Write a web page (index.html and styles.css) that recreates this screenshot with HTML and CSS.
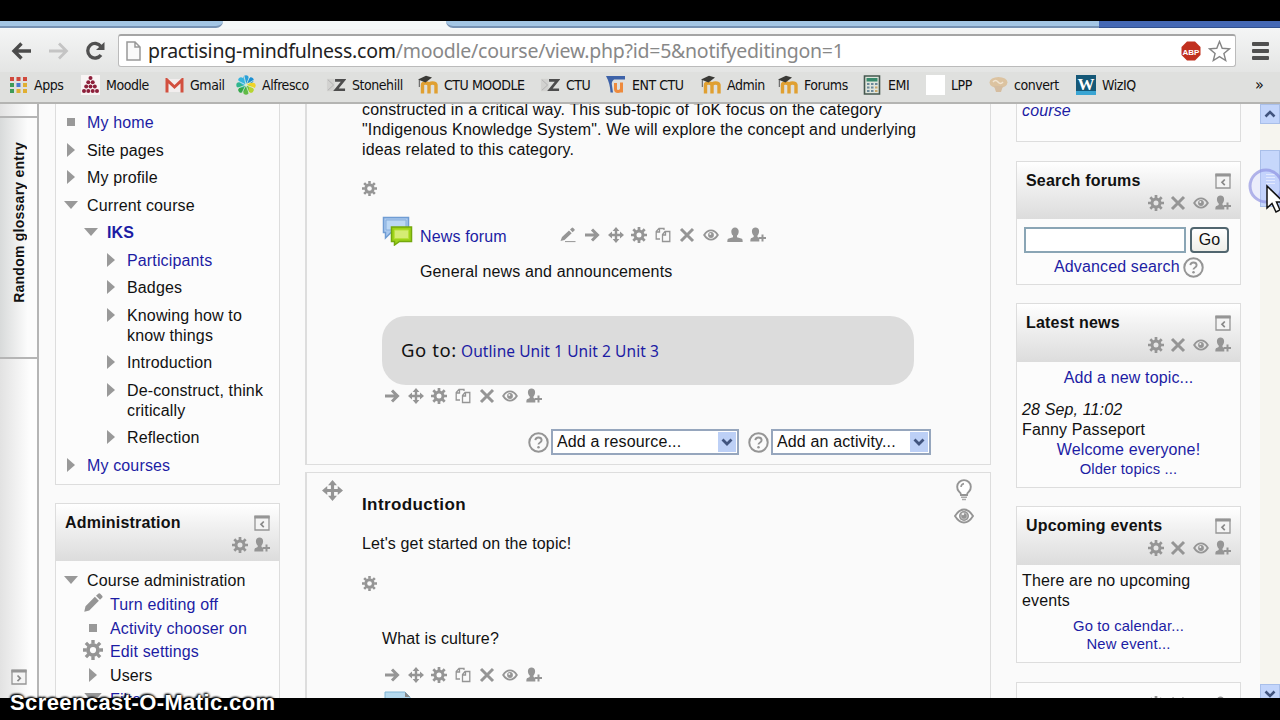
FILE: index.html
```
<!DOCTYPE html>
<html lang="en">
<head>
  <meta charset="UTF-8" />
  <meta name="viewport" content="width=device-width, initial-scale=1.0" />
  <title>IKS</title>
  <link rel="stylesheet" href="styles.css">
</head>
<body>
  <!-- icon set -->
  <svg class="defs" width="0" height="0">
    <symbol id="gear" viewBox="0 0 16 16">
      <circle cx="8" cy="8" r="4" fill="none" stroke="#959595" stroke-width="3"/>
      <path d="M8 0v3M8 13v3M0 8h3M13 8h3M2.3 2.3l2.2 2.2M11.5 11.5l2.2 2.2M13.7 2.3l-2.2 2.2M4.5 11.5l-2.2 2.2" stroke="#959595" stroke-width="2.7"/>
    </symbol>
    <symbol id="right" viewBox="0 0 16 16"><path d="M1 8h12M8 2.5L13.5 8L8 13.5" fill="none" stroke="#959595" stroke-width="3"/></symbol>
    <symbol id="move" viewBox="0 0 16 16"><path d="M8 2v12M2 8h12" stroke="#959595" stroke-width="2.4"/><path d="M8 0l3.4 4H4.600zM8 16l3.400-4H4.600zM0 8l4-3.400v6.800zM16 8l-4-3.400v6.800z" fill="#959595"/></symbol>
    <symbol id="copy" viewBox="0 0 16 16"><path d="M5 12H1.200V4.500L4 1.500H9V3M1.500 5H4.500V2M7.500 14.500V7.500L10 4.500H14.800V14.500zM7.500 8H10.500V5" fill="none" stroke="#959595" stroke-width="1.300"/></symbol>
    <symbol id="cross" viewBox="0 0 16 16"><path d="M2 2l12 12M14 2L2 14" stroke="#959595" stroke-width="3"/></symbol>
    <symbol id="eye" viewBox="0 0 16 16"><path d="M1.200 8Q4 3.400 8 3.400T14.800 8Q12 12.600 8 12.600T1.200 8z" fill="none" stroke="#959595" stroke-width="1.900"/><circle cx="8" cy="8" r="2.900" fill="#959595"/><circle cx="7.300" cy="6.900" r="1" fill="#eee"/></symbol>
    <symbol id="user" viewBox="0 0 16 16"><path d="M8 0.500a3.700 3.700 0 0 1 3.700 3.900c0 2-.8 3.300-1.700 4.200v1.700l5 1.500q.7.500.7 3.200H.3q0-2.700.7-3.200l5-1.500V8.600C5.100 7.700 4.300 6.400 4.300 4.400A3.700 3.700 0 0 1 8 .5z" fill="#959595"/></symbol>
    <symbol id="useradd" viewBox="0 0 16 16"><path d="M5.500 0.500a3.600 3.600 0 0 1 3.600 3.800c0 1.900-.8 3.200-1.600 4.200v1.600l1.800.7v3.700H.3q0-2.600.7-3.200l2.700-1.200V8.500C2.700 7.500 1.900 6.200 1.900 4.300A3.600 3.600 0 0 1 5.500.5z" fill="#959595"/><path d="M12.500 7.500v7M9 11h7" stroke="#959595" stroke-width="2"/></symbol>
    <symbol id="pencil" viewBox="0 0 16 16"><path d="M1 15l1-4.500L9.500 3l3.200 3.200L5 14zM10.400 2.200L12.200.5q.8-.6 1.600.1l1.500 1.500q.7.800 0 1.600l-1.700 1.700z" fill="#959595"/></symbol>
    <symbol id="edit" viewBox="0 0 16 16"><path d="M0.500 14l1.500-4L9 3.500l2.700 2.700L4.500 13zM10 2.600L12 .8q.6-.4 1.200.1l1.300 1.300q.5.600 0 1.200l-1.900 1.900z" fill="#959595"/><path d="M5 14.600h10.500" stroke="#959595" stroke-width="1"/></symbol>
    <symbol id="dockleft" viewBox="0 0 16 16"><path d="M1 1.500h14v13.500H1z" fill="#f4f4f4" stroke="#959595" stroke-width="1.300"/><path d="M.4 0.500h15.200v3H.4z" fill="#959595"/><path d="M9.800 6.500L7 9.300l2.800 2.800" fill="none" stroke="#888" stroke-width="1.700"/></symbol>
    <symbol id="dockright" viewBox="0 0 16 16"><path d="M1 1.500h14v13.500H1z" fill="#f4f4f4" stroke="#959595" stroke-width="1.300"/><path d="M.4 0.500h15.200v3H.4z" fill="#959595"/><path d="M6.500 6.500L9.300 9.300l-2.800 2.800" fill="none" stroke="#888" stroke-width="1.700"/></symbol>
    <symbol id="closed" viewBox="0 0 16 16"><path d="M4 1l8 7l-8 7z" fill="#999"/></symbol>
    <symbol id="open" viewBox="0 0 16 16"><path d="M1 4h14l-7 8z" fill="#999"/></symbol>
    <symbol id="leaf" viewBox="0 0 16 16"><path d="M4 4h8v8H4z" fill="#999"/></symbol>
    <symbol id="help" viewBox="0 0 20 20"><circle cx="10" cy="10" r="8.800" fill="#fafafa" stroke="#959595" stroke-width="1.900"/><path d="M7 7.800Q7.200 5.200 10 5.200T13 7.700Q13 9.200 11.200 10.200Q10 10.900 10 12" fill="none" stroke="#959595" stroke-width="1.800"/><circle cx="10" cy="14.500" r="1.200" fill="#959595"/></symbol>
    <symbol id="bulb" viewBox="0 0 20 22"><path d="M7 16Q7 14 5 12.500A6.800 6.800 0 1 1 15 12.500Q13 14 13 16z" fill="#fff" stroke="#959595" stroke-width="1.900"/><path d="M7 18.300h6M8 20.500h4" stroke="#aaa" stroke-width="1.400"/><path d="M7 8q.3-3 3-3.400" fill="none" stroke="#999" stroke-width="1.600"/></symbol>
    <symbol id="watch" viewBox="0 0 20 20"><path d="M1 10Q5 3.500 10 3.500T19 10Q15 16.500 10 16.500T1 10z" fill="#fff" stroke="#959595" stroke-width="1.900"/><circle cx="10" cy="10" r="5" fill="#959595"/><circle cx="10" cy="10" r="3.200" fill="none" stroke="#c9c9c9" stroke-width=".8"/><circle cx="9" cy="8" r="1.200" fill="#eee"/></symbol>
    <symbol id="mortar" viewBox="0 0 20 20">
      <path d="M4.500 18.500V10q0-2 3-2t3.500 2v8.500M11 10q.5-2 3.500-2t3.500 2v8.500" fill="none" stroke="#e0a032" stroke-width="3.400"/>
      <path d="M0 4.500L8 .8l6 1.600L7.500 7.500z" fill="#3a3a36"/><path d="M1.300 5v7" stroke="#555" stroke-width="1"/>
    </symbol>
    <symbol id="zed" viewBox="0 0 21 16"><path d="M1 1.500h8v13H1z" fill="#d2d2d0"/><path d="M2 2.500l6 5.500l-6 5.500" fill="none" stroke="#b2b2b2"/><path d="M9.500 3.200h9L10.500 13H20" fill="none" stroke="#4d4d4d" stroke-width="2.800"/></symbol>
  </svg>

  <div class="tabstrip">
    <span class="tab tab-left"></span>
    <span class="tab tab-right"></span>
    <span class="tab-end"></span>
  </div>

  <div class="toolbar">
    <svg class="nav-btn" width="22" height="20" viewBox="0 0 22 20"><path d="M3 10h17M10.500 2.500L3 10l7.500 7.500" fill="none" stroke="#4b4b4b" stroke-width="3.400"/></svg>
    <svg class="nav-btn" width="22" height="20" viewBox="0 0 22 20"><path d="M1 10h17M11 2.500l7.500 7.500l-7.500 7.500" fill="none" stroke="#c4c4c4" stroke-width="2.800"/></svg>
    <svg class="nav-btn" width="20" height="20" viewBox="0 0 20 20"><path d="M16 14a7.300 7.300 0 1 1 0-8.500" fill="none" stroke="#505050" stroke-width="3.300"/><path d="M19.500 1v8h-8.500z" fill="#505050"/></svg>
    <div class="omnibox">
      <svg width="15" height="20" viewBox="0 0 15 20"><path d="M1 1h8l5 5v13H1zM9 1v5h5" fill="#fafafa" stroke="#999" stroke-width="1.500"/></svg>
      <div class="url">practising-mindfulness.com<span>/moodle/course/view.php?id=5&amp;notifyeditingon=1</span></div>
      <svg width="20" height="20" viewBox="0 0 20 20"><path d="M6 .5h8L19.500 6v8L14 19.500H6L.5 14V6z" fill="#c1301f"/><text x="10" y="13.500" class="abp" text-anchor="middle">ABP</text></svg>
      <svg class="star" width="23" height="22" viewBox="0 0 23 22"><path d="M11.500 1.500l2.700 6.800l7.300.5l-5.600 4.700l1.800 7l-6.200-3.900l-6.200 3.900l1.800-7L1.500 8.800l7.300-.5z" fill="#fff" stroke="#858585" stroke-width="1.400"/></svg>
    </div>
    <div class="menu-btn"><i></i><i></i><i></i></div>
  </div>

  <div class="bookmarks">
    <div class="bm"><svg width="19" height="18" viewBox="0 0 19 18"><path d="M1 1h4v4H1zM7.500 1h4v4h-4zM14 1h4v4h-4z" fill="#d0493c"/><path d="M1 7h4v4H1z" fill="#3f9b58"/><path d="M7.500 7h4v4h-4z" fill="#4a78cf"/><path d="M14 7h4v4h-4zM7.500 13h4v4h-4zM14 13h4v4h-4z" fill="#e0af32"/><path d="M1 13h4v4H1z" fill="#3f9b58"/></svg>Apps</div>
    <div class="bm"><svg width="19" height="20" viewBox="0 0 19 20"><path d="M0 0h19v20H0z" fill="#f8f4f4"/><g fill="#8d1f3a"><circle cx="9.500" cy="3" r="2"/><circle cx="7.300" cy="7.300" r="2"/><circle cx="11.700" cy="7.300" r="2"/><circle cx="5.200" cy="11.600" r="2"/><circle cx="9.500" cy="11.600" r="2"/><circle cx="13.800" cy="11.600" r="2"/><circle cx="3" cy="16" r="2"/><circle cx="7.300" cy="16" r="2"/><circle cx="11.700" cy="16" r="2"/><circle cx="16" cy="16" r="2"/></g></svg>Moodle</div>
    <div class="bm"><svg width="19" height="15" viewBox="0 0 19 15"><path d="M1 1h17v13H1z" fill="#f2eeee"/><path d="M2 14.500V2l7.500 7L17 2v12.500" fill="none" stroke="#d2503f" stroke-width="3"/></svg>Gmail</div>
    <div class="bm"><svg width="20" height="20" viewBox="0 0 20 20"><g stroke-width="5.400" stroke-linecap="round"><path d="M10 7V3" stroke="#2b9fd8"/><path d="M12.500 8l2.500-3" stroke="#1c8fd2"/><path d="M13 10.500h4" stroke="#f0d428"/><path d="M12.500 12.500l2.500 2.500" stroke="#b7d531"/><path d="M10 13v4" stroke="#61bb46"/><path d="M7.500 12.500L5 15" stroke="#35a84a"/><path d="M7 10H3" stroke="#2fb58d"/><path d="M7.500 7.500L5 5" stroke="#35b4dd"/></g><path d="M10 10L8 1M10 10l8-5M10 10l8 3M10 10l3 8M10 10l-4 8M10 10l-8 3M10 10L2 6M10 10l4-9" stroke="#e4f0e4" stroke-width=".8"/></svg>Alfresco</div>
    <div class="bm"><svg width="20" height="16"><use href="#zed"/></svg>Stonehill</div>
    <div class="bm"><svg width="20" height="20"><use href="#mortar"/></svg>CTU MOODLE</div>
    <div class="bm"><svg width="20" height="16"><use href="#zed"/></svg>CTU</div>
    <div class="bm"><svg width="20" height="18" viewBox="0 0 20 18"><path d="M0 0h19v3.500H8q-3 2-2 6l1 7H4.500Q4 7 0 0z" fill="#3d62a8"/><path d="M9.500 7v6q0 2.500 2.500 2.500t3.500-2.500V6.500V16.500" fill="none" stroke="#ee8a3c" stroke-width="3"/></svg>ENT CTU</div>
    <div class="bm"><svg width="20" height="20"><use href="#mortar"/></svg>Admin</div>
    <div class="bm"><svg width="20" height="20"><use href="#mortar"/></svg>Forums</div>
    <div class="bm"><svg width="19" height="20" viewBox="0 0 19 20"><path d="M1.500 1h15v18h-15z" fill="#dfe5dc" stroke="#46584f" stroke-width="1.600"/><path d="M3.500 3h11v3.500h-11z" fill="#388a6c"/><path d="M4 9h2.500M8 9h2.500M12 9h2.500M4 12.500h2.500M8 12.500h2.500M4 16h2.500M8 16h2.500" stroke="#6d8a9a" stroke-width="2"/><path d="M12 12.500h2.500M12 16h2.500" stroke="#c9a86a" stroke-width="2"/></svg>EMI</div>
    <div class="bm"><svg width="19" height="20"><rect width="19" height="20" fill="#fff"/></svg>LPP</div>
    <div class="bm"><svg width="19" height="18" viewBox="0 0 19 18"><ellipse cx="9.500" cy="6.500" rx="9" ry="5.500" fill="#dcc3a0"/><path d="M5 10h9l-2 6H7z" fill="#d5bda0"/><path d="M4 6q2.500-3 5 0t5 0" fill="none" stroke="#f1e5d3" stroke-width="1.500"/></svg>convert</div>
    <div class="bm"><svg width="20" height="20" viewBox="0 0 20 20"><rect width="20" height="20" fill="#155877"/><path d="M0 16h20v4H0z" fill="#3aa5d3"/><text x="10" y="15" class="wiz" text-anchor="middle">W</text></svg>WizIQ</div>
    <div class="more">»</div>
  </div>

  <div class="page">
    <div class="dock">
      <div class="dock-item"><span>Random glossary entry</span></div>
      <svg class="dock-all" width="16" height="16"><use href="#dockright"/></svg>
    </div>

    <div class="col left">
      <div class="block nav">
        <div class="row"><svg><use href="#leaf"/></svg><a>My home</a></div>
        <div class="row"><svg><use href="#closed"/></svg>Site pages</div>
        <div class="row"><svg><use href="#closed"/></svg>My profile</div>
        <div class="row"><svg><use href="#open"/></svg>Current course</div>
        <div class="row l2"><svg><use href="#open"/></svg><a><b>IKS</b></a></div>
        <div class="row l3"><svg><use href="#closed"/></svg><a>Participants</a></div>
        <div class="row l3"><svg><use href="#closed"/></svg>Badges</div>
        <div class="row l3"><svg><use href="#closed"/></svg><span>Knowing how to<br>know things</span></div>
        <div class="row l3"><svg><use href="#closed"/></svg>Introduction</div>
        <div class="row l3"><svg><use href="#closed"/></svg><span>De-construct, think<br>critically</span></div>
        <div class="row l3"><svg><use href="#closed"/></svg>Reflection</div>
        <div class="row"><svg><use href="#closed"/></svg><a>My courses</a></div>
      </div>

      <div class="block admin">
        <div class="head">
          <div class="title"><h2>Administration</h2><svg><use href="#dockleft"/></svg></div>
          <div class="cmds"><svg><use href="#gear"/></svg><svg><use href="#useradd"/></svg></div>
        </div>
        <div class="tree">
          <div class="row"><svg><use href="#open"/></svg>Course administration</div>
          <div class="row sub"><svg class="big"><use href="#pencil"/></svg><a>Turn editing off</a></div>
          <div class="row sub"><svg><use href="#leaf"/></svg><a>Activity chooser on</a></div>
          <div class="row sub"><svg class="big"><use href="#gear"/></svg><a>Edit settings</a></div>
          <div class="row sub"><svg><use href="#closed"/></svg>Users</div>
          <div class="row sub"><svg class="big"><use href="#open"/></svg><a>Filters</a></div>
        </div>
      </div>
    </div>

    <div class="main">
      <div class="section first">
        <p class="summary">constructed in a critical way. This sub-topic of ToK focus on the category<br>"Indigenous Knowledge System". We will explore the concept and underlying<br>ideas related to this category.</p>
        <svg class="gear"><use href="#gear"/></svg>
        <div class="forum">
          <svg class="forum-icon" width="31" height="30" viewBox="0 0 31 30">
            <path d="M1.500 1.500h25v15H9L3.500 22V16.500h-2z" fill="#a9c8ee" stroke="#6f9cd3" stroke-width="1.500"/>
            <path d="M4 4h20v10H4z" fill="#bcd8f5" stroke="#86aedd"/>
            <path d="M9.500 11h20v14.500h-12L12.500 29v-3.500h-3z" fill="#9ed318" stroke="#74a80d" stroke-width="1.500"/>
            <path d="M12.500 14h14v8.500h-14z" fill="#d5ec74" stroke="#b9e03c"/>
          </svg>
          <a>News forum</a>
          <div class="cmds"><svg><use href="#edit"/></svg><svg><use href="#right"/></svg><svg><use href="#move"/></svg><svg><use href="#gear"/></svg><svg><use href="#copy"/></svg><svg><use href="#cross"/></svg><svg><use href="#eye"/></svg><svg><use href="#user"/></svg><svg><use href="#useradd"/></svg></div>
        </div>
        <p class="desc">General news and announcements</p>
        <div class="goto"><span>Go to:</span> <a>Outline</a> <a>Unit 1</a> <a>Unit 2</a> <a>Unit 3</a></div>
        <div class="cmds label-cmds"><svg><use href="#right"/></svg><svg><use href="#move"/></svg><svg><use href="#gear"/></svg><svg><use href="#copy"/></svg><svg><use href="#cross"/></svg><svg><use href="#eye"/></svg><svg><use href="#useradd"/></svg></div>
        <div class="adders">
          <svg class="help"><use href="#help"/></svg>
          <div class="select resource">Add a resource...<i><svg width="12" height="8" viewBox="0 0 12 8"><path d="M1.500 1.500L6 6l4.500-4.500" fill="none" stroke="#41547e" stroke-width="2.800"/></svg></i></div>
          <svg class="help"><use href="#help"/></svg>
          <div class="select activity">Add an activity...<i><svg width="12" height="8" viewBox="0 0 12 8"><path d="M1.500 1.500L6 6l4.500-4.500" fill="none" stroke="#41547e" stroke-width="2.800"/></svg></i></div>
        </div>
      </div>

      <div class="section second">
        <svg class="mover"><use href="#move"/></svg>
        <div class="content">
          <h3>Introduction</h3>
          <p class="lead">Let's get started on the topic!</p>
          <svg class="gear"><use href="#gear"/></svg>
          <p class="label">What is culture?</p>
          <div class="cmds label-cmds"><svg><use href="#right"/></svg><svg><use href="#move"/></svg><svg><use href="#gear"/></svg><svg><use href="#copy"/></svg><svg><use href="#cross"/></svg><svg><use href="#eye"/></svg><svg><use href="#useradd"/></svg></div>
          <svg class="file" width="28" height="20" viewBox="0 0 28 20"><path d="M1 1h20l5 5v14H1z" fill="#b5d9ee" stroke="#7fb4d4"/><path d="M21 1l5 5h-5z" fill="#888"/></svg>
        </div>
        <div class="side"><svg width="20" height="22"><use href="#bulb"/></svg><svg width="20" height="20"><use href="#watch"/></svg></div>
      </div>
    </div>

    <div class="col right">
      <div class="block top"><a><em>course</em></a></div>

      <div class="block search">
        <div class="head">
          <div class="title"><h2>Search forums</h2><svg><use href="#dockleft"/></svg></div>
          <div class="cmds"><svg><use href="#gear"/></svg><svg><use href="#cross"/></svg><svg><use href="#eye"/></svg><svg><use href="#useradd"/></svg></div>
        </div>
        <div class="search-form"><input type="text"><button type="button">Go</button></div>
        <div class="advanced"><a>Advanced search</a><svg class="help"><use href="#help"/></svg></div>
      </div>

      <div class="block news">
        <div class="head">
          <div class="title"><h2>Latest news</h2><svg><use href="#dockleft"/></svg></div>
          <div class="cmds"><svg><use href="#gear"/></svg><svg><use href="#cross"/></svg><svg><use href="#eye"/></svg><svg><use href="#useradd"/></svg></div>
        </div>
        <p class="mid add"><a>Add a new topic...</a></p>
        <p><em>28 Sep, 11:02</em></p>
        <p>Fanny Passeport</p>
        <p class="mid"><a>Welcome everyone!</a></p>
        <p class="mid small"><a>Older topics ...</a></p>
      </div>

      <div class="block events">
        <div class="head">
          <div class="title"><h2>Upcoming events</h2><svg><use href="#dockleft"/></svg></div>
          <div class="cmds"><svg><use href="#gear"/></svg><svg><use href="#cross"/></svg><svg><use href="#eye"/></svg><svg><use href="#useradd"/></svg></div>
        </div>
        <p class="none">There are no upcoming<br>events</p>
        <p class="mid small"><a>Go to calendar...</a></p>
        <p class="mid small"><a>New event...</a></p>
      </div>

      <div class="block last">
        <div class="cmds"><svg><use href="#gear"/></svg><svg><use href="#cross"/></svg><svg><use href="#eye"/></svg><svg><use href="#useradd"/></svg></div>
      </div>
    </div>

    <div class="scrollbar">
      <div class="sb-btn"><svg width="12" height="8" viewBox="0 0 12 8"><path d="M1.500 6.500L6 2l4.500 4.500" fill="none" stroke="#41547e" stroke-width="2.600"/></svg></div>
      <div class="thumb"><i></i><i></i><i></i><i></i></div>
      <div class="sb-btn down"><svg width="12" height="8" viewBox="0 0 12 8"><path d="M1.500 1.500L6 6l4.500-4.500" fill="none" stroke="#41547e" stroke-width="2.600"/></svg></div>
    </div>
  </div>

  <div class="watermark">Screencast-O-Matic.com</div>
  <svg class="pointer" width="34" height="46" viewBox="0 0 34 46">
    <circle cx="20" cy="19" r="16" fill="rgba(190,200,255,.25)" stroke="#8c8fe0" stroke-opacity=".65" stroke-width="3"/>
    <path d="M21 19v22l5-4.500l4 8.500l4-2l-3.500-8h7z" fill="#fff" stroke="#111" stroke-width="1.500"/>
  </svg>
</body>
</html>
```
FILE: styles.css
```
* { box-sizing: border-box; margin: 0; padding: 0; }
body {
  position: relative;
  width: 1280px;
  height: 720px;
  overflow: hidden;
  padding-top: 21px;
  background: #000;
  color: #111;
  font-family: "Liberation Sans", Arial, sans-serif;
  font-size: 16px;
  letter-spacing: 0.14px;
  line-height: 20px;
  white-space: nowrap;
}
a { color: #1c1ca4; }
svg { flex: none; display: block; }
.defs { position: absolute; }

/* browser chrome */
.tabstrip {
  display: flex;
  height: 8px;
  background: #f5f9f9;
}
.tab {
  height: 7px;
  background: #a3c6e4;
  border-bottom: 2px solid #7793b4;
}
.tab-left { width: 223px; border-radius: 0 0 7px 0; }
.tab-right { width: 653px; margin-left: 223px; border-radius: 0 0 0 7px; }
.tab-end { flex: 1; height: 7px; background: #4468b4; border-bottom: 1px solid #31508f; }
.toolbar {
  display: flex;
  align-items: center;
  height: 43px;
  padding: 0 11px;
  background: linear-gradient(#f4f5f5, #e4e5e4);
}
.nav-btn { margin-right: 15px; }
.omnibox {
  display: flex;
  align-items: center;
  width: 1118px;
  height: 33px;
  padding: 0 4px 0 7px;
  background: #fff;
  border: 1px solid #bbb;
  border-top: 2px solid #a5a5a5;
  border-radius: 3px;
}
.nav-btn + .omnibox { margin-left: -2px; }
.url {
  flex: 1;
  margin-left: 7px;
  font-family: "Noto Sans", sans-serif;
  font-size: 19.5px;
  letter-spacing: -0.25px;
  color: #222;
}
.url span { color: #888; }
.abp { font: bold 8px "Liberation Sans"; fill: #fff; letter-spacing: 0; }
.star { margin-left: 7px; }
.menu-btn { display: flex; flex-direction: column; gap: 3px; margin-left: 16px; }
.menu-btn i { width: 17px; height: 4px; background: #505050; border-radius: 1px; }
.bookmarks {
  display: grid;
  grid-template-columns: 72px 84px 71px 90px 92px 122px 66px 95px 77px 85px 63px 63px 87px 179px auto;
  align-items: center;
  height: 32px;
  padding: 2px 0 6px 9px;
  background: #dfe0de;
  border-bottom: 2px solid #b4b4b2;
  font-family: "DejaVu Sans Condensed", "DejaVu Sans", sans-serif;
  font-stretch: condensed;
  font-size: 14px;
  letter-spacing: -0.45px;
}
.bm { display: flex; align-items: center; gap: 6px; }
.more { font-size: 16px; }
.wiz { font: bold 17px "Liberation Serif"; fill: #fff; letter-spacing: 0; }

/* page */
.page {
  display: flex;
  height: 594px;
  overflow: hidden;
  background: #fafafa;
}
.dock {
  display: flex;
  flex-direction: column;
  width: 39px;
  padding-top: 12px;
  background: linear-gradient(90deg, #e2e2e2, #fdfdfd 80%);
  border-right: 2px solid #b5b5b5;
}
.dock-item {
  display: flex;
  align-items: flex-start;
  justify-content: center;
  height: 243px;
  padding-top: 24px;
  border-top: 2px solid #b5b5b5;
  border-bottom: 2px solid #b5b5b5;
  background: linear-gradient(90deg, #d8dada, #fcfcfc 75%);
}
.dock-item span {
  writing-mode: vertical-rl;
  transform: rotate(180deg);
  font-size: 14px;
  font-weight: bold;
  letter-spacing: 0.25px;
}
.dock-all { margin: 310px 0 0 11px; }
.col { width: 225px; flex: none; }
.left { margin-left: 16px; }
.right { margin-left: 25px; }
.block {
  background: #fcfcfc;
  border: 1px solid #ddd;
}
.row { display: flex; margin-bottom: 7.5px; }
.row svg { width: 16px; height: 16px; margin: 1px 8px 0 0; }
.nav { height: 381px; padding: 9px 0 0 7px; border-top: 0; }
.nav .l2 { padding-left: 20px; }
.nav .l3 { padding-left: 40px; }
.admin { height: 260px; margin-top: 18px; }
.head {
  height: 57px;
  padding: 9px 9px 0 9px;
  background: linear-gradient(#fff, #f0f0f0 40%, #dcdcdc);
}
.title { display: flex; justify-content: space-between; align-items: center; }
.title svg, .cmds svg { width: 16px; height: 16px; }
h2, h3 { font-size: 16px; line-height: 20px; letter-spacing: 0.2px; }
h3 { font-size: 17px; letter-spacing: 0.4px; }
.head .cmds { display: flex; justify-content: flex-end; gap: 6.5px; margin-top: 4px; }
.tree { padding: 10px 0 0 7px; }
.tree .row { margin-bottom: 3.8px; }
.tree .sub { padding-left: 22px; }
.tree .sub svg { margin-right: 9px; }
.tree .sub svg.big { width: 20px; height: 20px; margin: -2px 7px 0 -2px; }

.main { width: 686px; flex: none; margin-left: 25px; }
.section { border: 1px solid #ddd; border-left-width: 2px; background: #fafafa; }
.first { height: 361px; padding: 0 0 0 55px; border-top: 0; }
.first { display: flow-root; }
.first { margin-bottom: 7px; }
.summary { margin-top: -4px; }
.gear { width: 15px; height: 15px; }
.first .gear { margin-top: 21px; }
.forum { display: flex; align-items: center; height: 30px; margin: 20px 0 0 20px; }
.forum a { width: 140px; margin: 12px 0 0 7px; }
.forum .cmds { display: flex; gap: 7.8px; margin-top: 8px; }
.desc { margin: 16px 0 0 58px; }
.goto {
  width: 532px;
  height: 69px;
  margin: 34px 0 0 20px;
  padding-left: 19px;
  border-radius: 24px;
  background: #dcdcdc;
  font-family: "Noto Sans", sans-serif;
  font-size: 15.5px;
  line-height: 68px;
  letter-spacing: 0.07px;
}
.goto span { font-size: 18.5px; letter-spacing: 0.6px; }
.label-cmds { display: flex; gap: 7.7px; margin: 3px 0 0 22px; }
.adders { display: flex; align-items: center; margin: 25px 0 0 166px; }
.help { width: 21px; height: 21px; }
.select {
  display: flex;
  align-items: center;
  justify-content: space-between;
  height: 26px;
  margin-left: 2px;
  padding: 0 1px 0 4px;
  background: #fff;
  border: 2px solid #96a6bd;
}
.select i {
  display: flex;
  align-items: center;
  justify-content: center;
  width: 18px;
  height: 20px;
  background: #bdd0f6;
}
.resource { width: 188px; margin-right: 9px; }
.activity { width: 160px; }
.first { height: 361px; }
.second { display: flex; height: 300px; }
.mover { width: 21px; height: 21px; margin: 7px 0 0 15px; }
.content { flex: 1; padding: 22px 0 0 19px; }
.lead { margin-top: 19px; }
.second .gear { margin-top: 22px; }
.label { margin: 38px 0 0 20px; }
.second .label-cmds { margin-top: 18px; }
.file { margin: 8px 0 0 22px; }
.side { width: 36px; padding-top: 6px; }
.side svg + svg { margin-top: 5px; }

.top { height: 38px; padding: 0 5px; margin-bottom: 19px; border-top: 0; }
.top a { display: block; line-height: 14px; }
.search { height: 124px; margin-bottom: 18px; }
.search-form { display: flex; gap: 4px; padding: 8px 0 0 7px; }
.search-form input {
  width: 162px;
  height: 26px;
  border: 2px solid #8aa5b5;
  background: #fff;
}
.search-form button {
  width: 39px;
  height: 26px;
  border: 2px solid #51666f;
  border-radius: 4px;
  background: linear-gradient(#fff, #eeeee8);
  font: 16px "Liberation Sans", sans-serif;
  color: #111;
}
.advanced { display: flex; align-items: center; gap: 3px; padding: 4px 0 0 37px; }
.advanced a { margin-top: -1px; }
.news { height: 185px; margin-bottom: 18px; }
.news p, .events p { padding: 0 5px; }
.news .mid, .events .mid { padding: 0; text-align: center; }
.news .add { margin: 6px 0 12px; }
.news .head, .events .head { height: 58px; }
.block .small { font-size: 14.8px; line-height: 18px; }
.events { height: 157px; margin-bottom: 19px; }
.events .none { margin: 6px 0; }
.last { height: 100px; padding: 13px 9px 0 0; }
.last .cmds { display: flex; justify-content: flex-end; gap: 6.5px; }

.scrollbar {
  display: flex;
  flex-direction: column;
  width: 20px;
  margin-left: auto;
  background: #f6f5ef;
}
.sb-btn {
  display: flex;
  align-items: center;
  justify-content: center;
  height: 20px;
  background: #c3d5fb;
  border: 1px solid #a9bfe9;
}
.thumb {
  display: flex;
  flex-direction: column;
  align-items: center;
  justify-content: center;
  gap: 2px;
  height: 57px;
  margin-top: 26px;
  background: #c6d7fb;
  border: 1px solid #a9bfe9;
}
.thumb i { width: 9px; height: 1px; background: #eef4fe; }
.down { margin-top: auto; margin-bottom: -6px; }

/* recorder overlay */
.watermark {
  position: absolute;
  left: 10px;
  bottom: 5px;
  color: #fff;
  font-size: 22px;
  font-weight: bold;
  line-height: 24px;
  letter-spacing: 0.4px;
  text-shadow: 0 0 3px #000, 0 0 3px #000, 1px 1px 2px #000, -1px -1px 2px #000;
}
.pointer { position: absolute; left: 1246px; top: 167px; }
```
